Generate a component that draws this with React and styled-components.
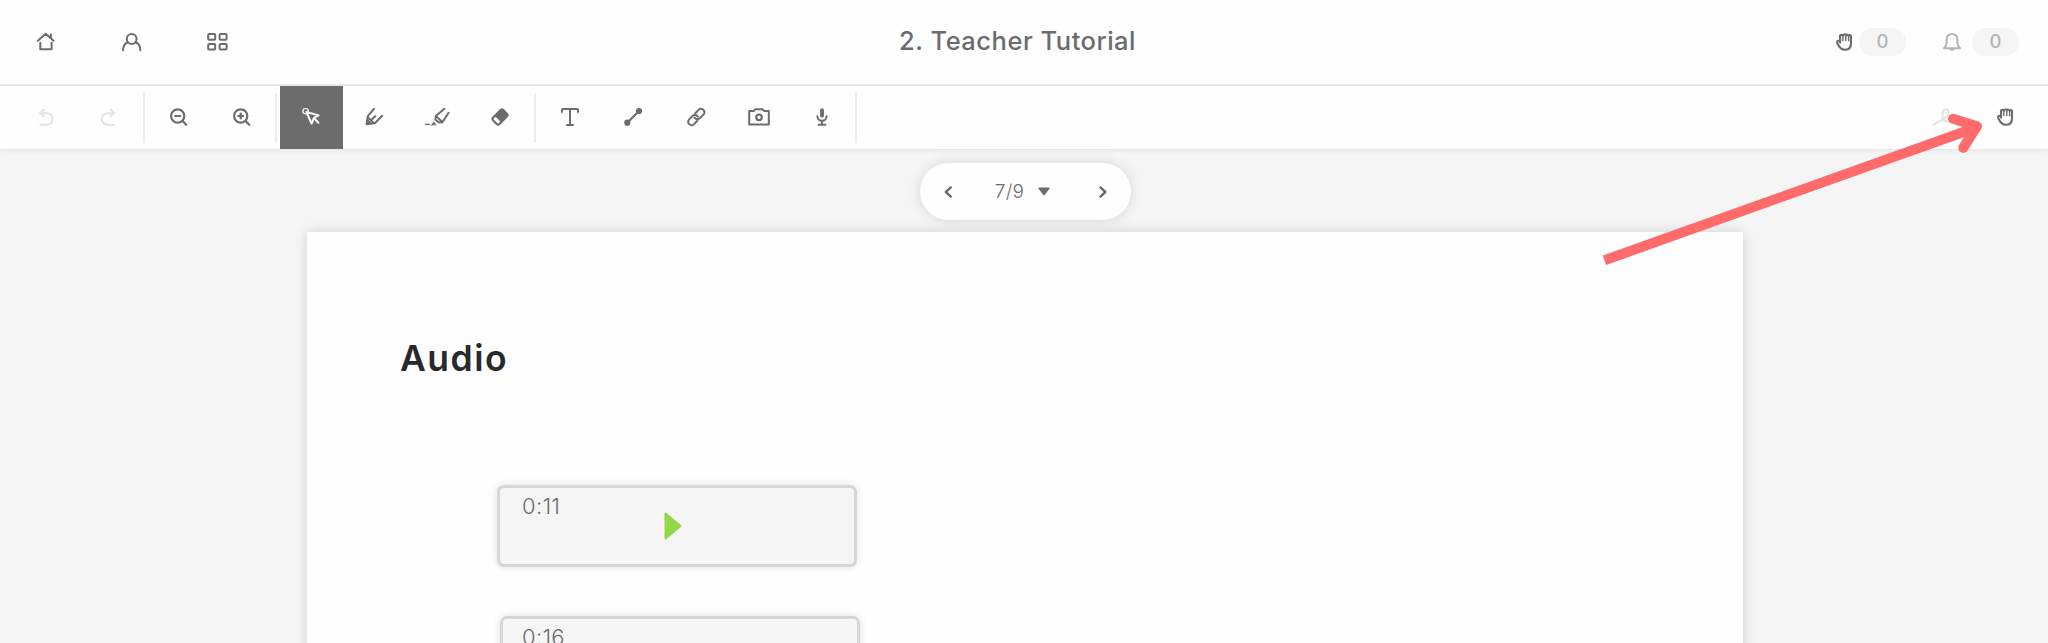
import React from 'react'
import styled, { createGlobalStyle } from 'styled-components'
import { Type } from 'lucide-react'

const GlobalStyle = createGlobalStyle`
	* {
		box-sizing: border-box;
	}
	body {
		margin: 0;
		background: #f5f5f5;
		font-family: Inter, "Liberation Sans", sans-serif;
		overflow: hidden;
	}
`

const Wrapper = styled.div`
	position: relative;
	width: 2048px;
	height: 643px;
	overflow: hidden;
	display: flex;
	flex-direction: column;
	color: #6b6c6e;
`

const Svg = styled.svg`
	flex: none;
	width: 24px;
	height: 24px;
	overflow: visible;
	fill: none;
	stroke: currentColor;
	stroke-linecap: round;
	stroke-linejoin: round;
	color: ${({ $color }) => $color || 'inherit'};
`

const Header = styled.header`
	flex: none;
	height: 86px;
	display: grid;
	grid-template-columns: 1fr auto 1fr;
	align-items: center;
	background: #fefefe;
	border-bottom: 2px solid #ececec;
`

const Nav = styled.nav`
	display: flex;
	gap: 61.5px;
	padding-left: 34px;
`

const NavItem = styled.div`
	display: flex;
`

const Title = styled.h1`
	margin: 0;
	padding: 0 13px 2px 0;
	font-size: 25.5px;
	font-weight: 550;
	line-height: 30px;
	letter-spacing: 0.5px;
`

const Status = styled.div`
	display: flex;
	justify-content: flex-end;
	gap: 34px;
	padding-right: 29px;
`

const StatusItem = styled.div`
	display: flex;
	align-items: center;
	gap: ${({ $gap }) => $gap}px;
`

const Count = styled.span`
	width: 47px;
	height: 28px;
	border-radius: 14px;
	background: #f5f5f5;
	color: #b2b4b5;
	font-size: 18.5px;
	font-weight: 500;
	line-height: 27px;
	text-align: center;
`

const Toolbar = styled.div`
	position: relative;
	flex: none;
	height: 63px;
	display: flex;
	align-items: center;
	padding: 0 12px 0 14.5px;
	background: #fefefe;
	box-shadow: 0 0 1px #dadada, 0 1px 5px rgba(0, 0, 0, 0.08);
`

const Tool = styled.div`
	flex: none;
	width: 63px;
	height: 63px;
	display: flex;
	align-items: center;
	justify-content: center;
	padding-bottom: 1px;
	background: ${({ $active }) => ($active ? '#6b6c6e' : 'transparent')};
`

const Divider = styled.div`
	width: 2px;
	height: 50px;
	margin: 0 2.5px 0 2px;
	background: #ededed;
`

const Spacer = styled.div`
	flex: 1;
`

const Workspace = styled.main`
	flex: 1;
	display: flex;
	flex-direction: column;
	padding: 14px 0 0 307px;
	background: #f5f5f5;
`

const Pager = styled.div`
	flex: none;
	width: 211px;
	height: 57px;
	display: flex;
	align-items: center;
	justify-content: space-between;
	margin-left: 613px;
	padding: 0 16px;
	border-radius: 29px;
	background: #fefefe;
	box-shadow: 0 0 14px rgba(0, 0, 0, 0.13);
`

const PageSelect = styled.div`
	display: flex;
	align-items: center;
	gap: 14px;
	padding-right: 6px;
	font-size: 19px;
	font-weight: 300;
	letter-spacing: 0.2px;
`

const Caret = styled.svg`
	width: 12px;
	height: 9px;
	fill: #6b6c6e;
	stroke: #6b6c6e;
	stroke-width: 1.6;
	stroke-linejoin: round;
`

const Page = styled.section`
	flex: none;
	width: 1436px;
	height: 900px;
	margin-top: 12px;
	padding-top: 105px;
	background: #fefefe;
	box-shadow: 0 0 12px rgba(0, 0, 0, 0.15);
`

const Heading = styled.h2`
	margin: 0 0 105px 93px;
	color: #28292b;
	font-size: 35.5px;
	font-weight: 600;
	line-height: 43px;
	letter-spacing: 1.5px;
`

const Card = styled.div`
	width: 360px;
	height: 82px;
	display: flex;
	align-items: flex-start;
	margin: 0 0 ${({ $gap }) => $gap}px ${({ $shift }) => $shift}px;
	border: 3px solid #d6d6d6;
	border-radius: 7px;
	background: #f5f5f5;
	box-shadow: 0 0 9px rgba(0, 0, 0, 0.12);
`

const Time = styled.span`
	width: 164px;
	padding: 5px 0 0 ${({ $left }) => $left}px;
	font-size: 22px;
	font-weight: 300;
	line-height: 27px;
	letter-spacing: 0.3px;
`

const Play = styled.svg`
	width: 18px;
	height: 28px;
	margin-top: 24px;
	fill: #94d748;
	stroke: #94d748;
	stroke-width: 2;
	stroke-linejoin: round;
`

// callout lying over the toolbar and the page
const Arrow = styled.svg`
	position: absolute;
	left: 1590px;
	top: 100px;
	width: 400px;
	height: 170px;
	fill: none;
	stroke: #ff6b6b;
	stroke-width: 10px;
`

// every icon is drawn around its own center
const Icon = ({ children, width = 2, color }) => (
	<Svg viewBox="-12 -12 24 24" strokeWidth={width} $color={color}>
		{children}
	</Svg>
)

const HomeIcon = () => (
	<Icon>
		<path d="M-8.2 -1.2 L-0.3 -8.2 L7.6 -1.2 M-5.7 0.8 V7.2 H5.6 V0.8 M4.9 -7.6 V-4" />
	</Icon>
)

const UserIcon = () => (
	<Icon>
		<circle cx="-0.3" cy="-3" r="4.9" />
		<path d="M-8.9 8.2 C-8.9 4.2 -6.9 1.2 -4.1 0.2 M8.3 8.2 C8.3 4.2 6.3 1.2 3.5 0.2" />
	</Icon>
)

const GridIcon = () => (
	<Icon>
		<rect x="-8.8" y="-7.9" width="7" height="5.6" rx="1" />
		<rect x="2.6" y="-7.9" width="7" height="5.6" rx="1" />
		<rect x="-8.8" y="1.9" width="7" height="5.6" rx="1" />
		<rect x="2.6" y="1.9" width="7" height="5.6" rx="1" />
	</Icon>
)

const HandIcon = () => (
	<Icon width={2.1}>
		<path d="M-3.9 0.8 V-5 a1.4 1.4 0 0 1 2.8 -1.2 a1.5 1.5 0 0 1 2.9 -0.4 a1.5 1.5 0 0 1 2.8 0.6 a1.2 1.2 0 0 1 2.4 1 V1.4 C7 5.6 4.6 7.8 0.8 7.8 C-3 7.8 -4.8 5.4 -6.7 1.2 C-7.6 -1 -5.6 -2 -3.9 -0.4" />
		<path d="M-1.1 -6 V-1.4 M1.8 -6 V-1.4 M4.6 -5 V-1.2" strokeWidth="1.4" />
	</Icon>
)

const BellIcon = () => (
	<Icon color="#b2b4b5">
		<path d="M-8.2 6.2 C-6 4.6 -5.4 3 -5.4 0 V-2.6 a5.4 5.4 0 0 1 10.8 0 V0 C5.4 3 6 4.6 8.2 6.2 Z M-1.5 7.6 H1.5" />
	</Icon>
)

const UndoIcon = () => (
	<Icon color="#e3e3e3">
		<path d="M-5.8 7.7 H1 A5.7 5.7 0 0 0 1 -3.7 H-5 M-2 -7.4 L-5.8 -3.9 L-2 -0.6" />
	</Icon>
)

const RedoIcon = () => (
	<Icon color="#e3e3e3">
		<path d="M5.3 7.7 H-1.5 A5.7 5.7 0 0 1 -1.5 -3.7 H4.5 M1.5 -7.4 L5.3 -3.9 L1.5 -0.6" />
	</Icon>
)

const ZoomIcon = ({ plus }) => (
	<Icon width={2.2}>
		<circle cx="-1.3" cy="-1" r="6.6" />
		<path d="M3.6 4 L7.2 7.8 M-3.8 -1 H1.2" />
		{plus && <path d="M-1.3 -3.5 V1.5" />}
	</Icon>
)

const PointerIcon = () => (
	<Icon color="#fff">
		<circle cx="-5.4" cy="-5.8" r="2.7" strokeWidth="1.2" />
		<path d="M-4.6 -5 L7.6 -1.6 L3 0.9 L0.6 6.6 Z M3 1 L7.4 5.8" />
	</Icon>
)

const PenIcon = () => (
	<Icon>
		<path d="M0 -8.2 L-6.2 -0.8 L-7.4 7.2 L0.8 6.2 L8.2 -1.2 M-6 0.4 L-0.2 6 M-2.2 2.4 L1.2 -0.8" />
		<path d="M-6.4 2.6 L-2 6.4 L-7.4 7.2 Z" fill="currentColor" strokeWidth="1" />
	</Icon>
)

const HighlighterIcon = () => (
	<Icon>
		<path d="M7.4 -8.2 L-1.2 -1 L-1.6 2.8 L1.8 5.4 L5.4 5.2 L11.6 -4.2 M-0.6 -0.6 L5 4.8" />
		<path d="M-5.6 8 L-3.2 4.8 L-0.8 7.6 Z" fill="currentColor" strokeWidth="0.6" />
		<path d="M-11.6 7.4 H-7.6" strokeWidth="1.3" />
	</Icon>
)

const EraserIcon = () => (
	<Icon>
		<g transform="rotate(-45)">
			<rect x="-7.3" y="-4.5" width="14.6" height="9" rx="2" fill="currentColor" />
			<rect x="-6.2" y="-3.4" width="3.3" height="6.8" rx="0.8" fill="#fff" stroke="none" />
		</g>
	</Icon>
)

const LineIcon = () => (
	<Icon>
		<path d="M-5.7 5.7 L6 -6" />
		<circle cx="-5.7" cy="5.7" r="2.1" fill="currentColor" />
		<circle cx="6" cy="-6" r="2.1" fill="currentColor" />
	</Icon>
)

const LinkIcon = () => (
	<Icon>
		<g transform="translate(0.3 0) rotate(-45)">
			<path d="M-2 3.4 H-6.7 a3.4 3.4 0 0 1 0 -6.8 H-1.6 a3.4 3.4 0 0 1 3.1 4.3" />
			<path d="M2 -3.4 H6.7 a3.4 3.4 0 0 1 0 6.8 H1.6 a3.4 3.4 0 0 1 -3.1 -4.3" />
		</g>
	</Icon>
)

const CameraIcon = () => (
	<Icon>
		<path d="M-9.8 -6 H-5 L-3.6 -7.8 H3.6 L5 -6 H9.8 V7.4 H-9.8 Z" />
		<circle cx="0" cy="0.3" r="2.8" strokeWidth="2.2" />
	</Icon>
)

const MicIcon = () => (
	<Icon>
		<rect x="-0.9" y="-7.8" width="1.8" height="7.4" rx="0.9" fill="currentColor" />
		<path d="M-4.6 -0.8 a4.6 4.6 0 0 0 9.2 0 M0 4 V7.6 M-3.4 7.8 H3.4" />
	</Icon>
)

const ScribbleIcon = () => (
	<Icon color="#e3e3e3">
		<path d="M-8.8 7.8 C-2 4.6 7.4 -0.6 6.6 -5.6 C6 -9.6 1.4 -8.6 0.6 -3.4 C-0.2 3 4 6.6 10 3.6" />
	</Icon>
)

const ChevronIcon = ({ right }) => (
	<Icon width={2.4}>
		<path d={right ? 'M-2.6 -4.6 L2.4 0 L-2.6 4.6' : 'M2.8 -4.6 L-2.2 0 L2.8 4.6'} />
	</Icon>
)

const AudioCard = ({ time, shift, gap, textLeft }) => (
	<Card $shift={shift} $gap={gap}>
		<Time $left={textLeft}>{time}</Time>
		<Play viewBox="0 0 18 28">
			<path d="M1.5 1.5 V26.5 L16.5 14 Z" />
		</Play>
	</Card>
)

const App = () => {

	return (
		<Wrapper>
			<GlobalStyle />
			<Header>
				<Nav>
					<NavItem><HomeIcon /></NavItem>
					<NavItem><UserIcon /></NavItem>
					<NavItem><GridIcon /></NavItem>
				</Nav>
				<Title>2. Teacher Tutorial</Title>
				<Status>
					<StatusItem $gap={3.5}>
						<HandIcon />
						<Count>0</Count>
					</StatusItem>
					<StatusItem $gap={8}>
						<BellIcon />
						<Count>0</Count>
					</StatusItem>
				</Status>
			</Header>

			<Toolbar>
				<Tool><UndoIcon /></Tool>
				<Tool><RedoIcon /></Tool>
				<Divider />
				<Tool><ZoomIcon /></Tool>
				<Tool><ZoomIcon plus /></Tool>
				<Divider />
				<Tool $active><PointerIcon /></Tool>
				<Tool><PenIcon /></Tool>
				<Tool><HighlighterIcon /></Tool>
				<Tool><EraserIcon /></Tool>
				<Divider />
				<Tool><Type size={24} strokeWidth={2} /></Tool>
				<Tool><LineIcon /></Tool>
				<Tool><LinkIcon /></Tool>
				<Tool><CameraIcon /></Tool>
				<Tool><MicIcon /></Tool>
				<Divider />
				<Spacer />
				<Tool><ScribbleIcon /></Tool>
				<Tool><HandIcon /></Tool>
			</Toolbar>

			<Workspace>
				<Pager>
					<ChevronIcon />
					<PageSelect>
						7/9
						<Caret viewBox="0 0 12 9">
							<path d="M1.2 1.2 H10.8 L6 7.6 Z" />
						</Caret>
					</PageSelect>
					<ChevronIcon right />
				</Pager>
				<Page>
					<Heading>Audio</Heading>
					<AudioCard time="0:11" shift={190} gap={49} textLeft={22} />
					<AudioCard time="0:16" shift={193} gap={0} textLeft={19} />
				</Page>
			</Workspace>

			<Arrow viewBox="0 0 400 170">
				<path d="M14.5 160.3 L384 28.2" />
				<path d="M363 18.8 L387 26.3 L373.3 47.8" strokeLinecap="round" strokeLinejoin="round" />
			</Arrow>
		</Wrapper>
	)
}

export default App
